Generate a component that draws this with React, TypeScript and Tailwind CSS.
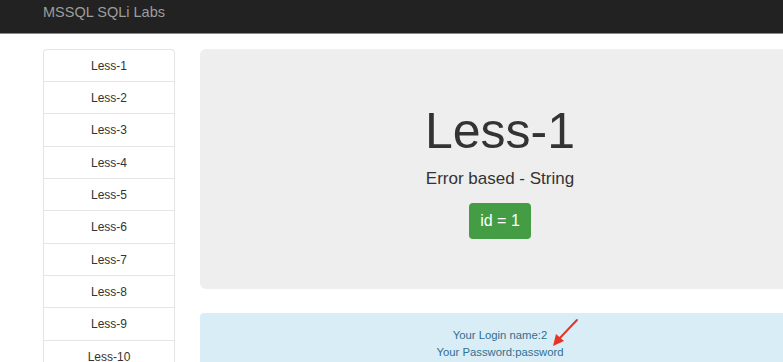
import React from "react";

const items: [string, number][] = [
  ["Less-1", 32], ["Less-2", 32], ["Less-3", 33], ["Less-4", 32], ["Less-5", 32],
  ["Less-6", 33], ["Less-7", 32], ["Less-8", 32], ["Less-9", 33], ["Less-10", 32], ["Less-11", 32],
];

export default function App() {
  return (
    <div className="w-[783px] h-[362px] overflow-hidden bg-white" style={{ fontFamily: '"Liberation Sans", Arial, sans-serif' }}>
      <div className="h-[34px] bg-[#222222] border-b border-[#8a8a8a] flex items-start pt-[5px] pl-[43px]">
        <span className="text-[14.5px] leading-[15px] text-[#9d9d9d]">MSSQL SQLi Labs</span>
      </div>
      <div className="flex pt-[15px] pl-[43px] gap-[25px]">
        <div className="w-[132px] shrink-0 flex flex-col">
          {items.map(([t, h], i) => (
            <div
              key={t}
              className={`${h === 33 ? "h-[33px]" : "h-[32px]"} box-border flex items-center justify-center text-[12px] text-[#333] border-x border-t border-[#e5e5e5] ${i === 0 ? "rounded-t-[4px]" : ""}`}
            >
              {t}
            </div>
          ))}
        </div>
        <div className="w-[600px] shrink-0 flex flex-col gap-[24px]">
          <div className="h-[240px] bg-[#eeeeee] rounded-[6px] flex flex-col items-center pt-[57px]">
            <div className="text-[50px] leading-none text-[#333]">Less-1</div>
            <div className="text-[17px] leading-none text-[#333] mt-[14px]">Error based - String</div>
            <div className="mt-[16px] w-[62px] h-[36px] rounded-[4px] bg-[#449d44] text-white text-[16px] flex items-center justify-center">id = 1</div>
          </div>
          <div className="relative h-[60px] bg-[#d9edf7] rounded-[4px] flex flex-col items-center pt-[14px] text-[11.3px] leading-[17px] text-[#31708f]">
            <div>Your Login name:2</div>
            <div>Your Password:password</div>
            <svg className="absolute left-[350px] top-[5px]" width="30" height="32" viewBox="0 0 30 32">
              <line x1="27" y1="2" x2="8" y2="22" stroke="#e53528" strokeWidth="2" strokeLinecap="round" />
              <polygon points="3,28 6,16 14,23" fill="#e53528" />
            </svg>
          </div>
        </div>
      </div>
    </div>
  );
}
